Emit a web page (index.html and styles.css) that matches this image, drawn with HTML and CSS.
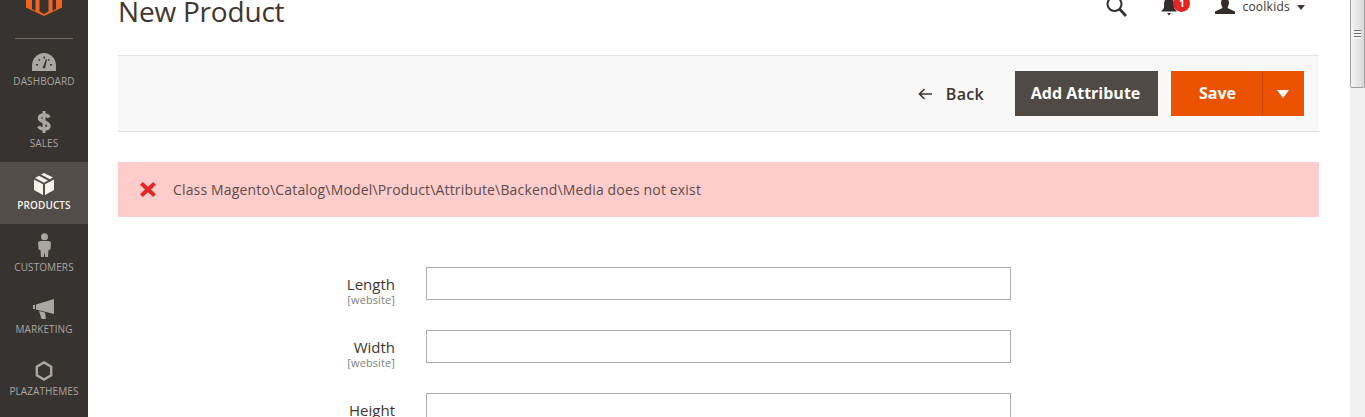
FILE: index.html
```html
<!DOCTYPE html>
<html lang="en">
<head>
    <meta charset="UTF-8">
    <title>New Product</title>
    <link rel="stylesheet" href="styles.css">
</head>
<body>
    <nav class="menu">
        <div class="logo">
            <svg width="36" height="16" viewBox="0 0 36 16"><path fill="#f26322" d="M0 0h6v9l3.500 2V0h4v11.500L18 14l4.500-2.500V0h4v11l3.500-2V0h6v7.500L18 16 0 7.500z"/></svg>
        </div>
        <a class="menu-item">
            <svg width="24" height="18" viewBox="0 0 24 18"><path fill="#aaa6a0" d="M0 18v-5C0 5.500 5.500 0 12 0s12 5.500 12 13v5z"/><path fill="#3a3632" d="M10.500 15l3.500-9 1 .5-2 9zM4 11h2v1.500H4zM7 6l1.500 1-1 1L6 7zM11.500 3.500h1.500v2h-1.500zM18 11h2v1.500h-2zM17 6l1 1-1.500 1-1-1z"/></svg>
            <span>DASHBOARD</span>
        </a>
        <a class="menu-item">
            <svg width="14" height="22" viewBox="0 0 14 22"><path fill="none" stroke="#aaa6a0" stroke-width="3.500" d="M12 6.500C11 4.500 9.500 4 7 4 4.500 4 2.500 5 2.500 7s2 3 4.500 3.800 5 1.700 5 4-2.200 3.200-5 3.200c-2.500 0-4.500-.8-5.500-2.800"/><path fill="#aaa6a0" d="M5.500 0h3v22h-3z"/></svg>
            <span>SALES</span>
        </a>
        <a class="menu-item active">
            <svg width="20" height="22" viewBox="0 0 20 22"><path fill="#f7f3e8" d="M10 0l9 4.500-3 1.800L7 1.600zM5 2.800l9 4.700-4 2.200L1 5zM0 6.500l9 4.800V22l-9-5zM20 6.500V17l-9 5V11.300z"/></svg>
            <span>PRODUCTS</span>
        </a>
        <a class="menu-item">
            <svg width="13" height="24" viewBox="0 0 13 24"><circle cx="6.500" cy="3.700" r="3.500" fill="#aaa6a0"/><path fill="#aaa6a0" d="M2.500 8h8l2.500 1 -.5 7.500-2 .5-.5 7H7.200l-.7-5-.7 5H3l-.5-7-2-.5L0 9z"/></svg>
            <span>CUSTOMERS</span>
        </a>
        <a class="menu-item">
            <svg width="22" height="20" viewBox="0 0 22 20"><path fill="#aaa6a0" d="M0 6h2v4H0zM3 5.500L21 0v15L3 10.500zM6 12l5 1.300 1 .2 1 6.500H8.500z"/></svg>
            <span>MARKETING</span>
        </a>
        <a class="menu-item">
            <svg width="18" height="20" viewBox="0 0 18 20"><path fill="none" stroke="#aaa6a0" stroke-width="2.400" d="M9 1.400l7.200 4.200v8.800L9 18.600l-7.200-4.200V5.600z"/></svg>
            <span>PLAZATHEMES</span>
        </a>
    </nav>

    <main class="content">
        <header class="page-header">
            <h1>New Product</h1>
            <div class="actions-top">
                <svg class="search-icon" width="21" height="20" viewBox="0 0 21 20"><circle cx="8.500" cy="7" r="7" fill="none" stroke="#332e2b" stroke-width="2"/><path stroke="#332e2b" stroke-width="2.600" d="M13.500 12l6.500 7"/></svg>
                <div class="bell">
                    <svg width="16" height="18" viewBox="0 0 16 18"><path fill="#332e2b" d="M8 0c3 0 5 2 5 6v4l3 3.500H0L3 10V6c0-4 2-6 5-6zM6 15h4l-2 2.500z"/></svg>
                    <span class="badge">1</span>
                </div>
                <div class="user">
                    <svg width="20" height="15" viewBox="0 0 20 15"><path fill="#332e2b" d="M10 0c2.700 0 4 1.300 4 3.500S12.800 8 12.500 9L20 12.500V15H0v-2.500L7.500 9C7.200 8 6 5.700 6 3.500S7.300 0 10 0z"/></svg>
                    <span class="user-name">coolkids</span>
                    <span class="caret"></span>
                </div>
            </div>
        </header>

        <div class="action-bar">
            <a class="back">
                <svg width="14" height="12" viewBox="0 0 14 12"><path fill="none" stroke="#41362f" stroke-width="1.700" d="M6.500 1L1.500 6l5 5M1.500 6H14"/></svg>
                <span>Back</span>
            </a>
            <button class="btn btn-dark">Add Attribute</button>
            <div class="split">
                <button class="btn btn-save">Save</button>
                <button class="btn btn-toggle"><span class="caret-white"></span></button>
            </div>
        </div>

        <div class="error-msg">
            <svg width="16" height="15" viewBox="0 0 16 15"><path fill="#e22626" d="M2.800 0L8 4.800 13.200 0 16 2.800 11 7.500l5 4.700-2.800 2.800L8 10.200 2.800 15 0 12.200l5-4.700-5-4.700z"/></svg>
            <span>Class Magento\Catalog\Model\Product\Attribute\Backend\Media does not exist</span>
        </div>

        <form class="product-form">
            <div class="field">
                <label>Length<small>[website]</small></label>
                <input type="text">
            </div>
            <div class="field">
                <label>Width<small>[website]</small></label>
                <input type="text">
            </div>
            <div class="field">
                <label>Height</label>
                <input type="text">
            </div>
        </form>
    </main>

    <div class="scrollbar">
        <div class="thumb">
            <div class="grip"></div>
        </div>
    </div>
</body>
</html>
```

FILE: styles.css
```css
/* General */
html, body {
    height: 417px;
    overflow: hidden;
}

body {
    margin: 0;
    display: flex;
    font-family: "Open Sans", "Noto Sans", sans-serif;
    color: #41362f;
    background-color: #fff;
}

/* Left menu */
.menu {
    flex: 0 0 88px;
    background-color: #373330;
    height: 417px;
    overflow: hidden;
}

.logo {
    height: 38px;
    margin: 0 15px;
    border-bottom: 1px solid #736d67;
    display: flex;
    justify-content: center;
    align-items: flex-start;
}

.menu-item {
    height: 62px;
    display: flex;
    flex-direction: column;
    align-items: center;
    justify-content: flex-end;
    box-sizing: border-box;
    padding-bottom: 12px;
    gap: 3px;
    font-size: 10px;
    letter-spacing: .1px;
    line-height: 14px;
    color: #aaa6a0;
}

.logo + .menu-item {
    height: 61px;
}

.menu-item.active {
    background-color: #524d49;
    color: #f7f3eb;
    font-weight: 600;
}

/* Page header */
.content {
    flex: 1;
    min-width: 0;
    padding: 0 30px;
}

.page-header {
    height: 55px;
    display: flex;
    justify-content: space-between;
    border-bottom: 1px solid #e3e3e3;
}

h1 {
    margin: 0;
    font-size: 28px;
    line-height: 23px;
    font-weight: 400;
    letter-spacing: -.2px;
    color: #41362f;
}

.actions-top {
    display: flex;
    align-items: flex-start;
    margin-right: 14px;
}

.search-icon {
    margin-top: -3px;
}

.bell {
    position: relative;
    margin: -2px 0 0 34px;
    height: 18px;
}

.badge {
    position: absolute;
    top: -3px;
    left: 12px;
    width: 17px;
    height: 17px;
    border-radius: 50%;
    background-color: #e22626;
    color: #fff;
    font-size: 10px;
    font-weight: 700;
    line-height: 17px;
    text-align: center;
}

.user {
    display: flex;
    align-items: flex-start;
    margin-left: 38px;
}

.user svg {
    margin-top: -1px;
}

.user-name {
    font-size: 12px;
    letter-spacing: .25px;
    line-height: 14px;
    margin-left: 7px;
    color: #41362f;
}

.caret {
    width: 0;
    height: 0;
    margin: 5px 0 0 7px;
    border-left: 4px solid transparent;
    border-right: 4px solid transparent;
    border-top: 5px solid #41362f;
}

/* Action bar */
.action-bar {
    height: 75px;
    background-color: #f8f8f8;
    border-bottom: 1px solid #e3e3e3;
    display: flex;
    align-items: center;
    justify-content: flex-end;
    padding-right: 15px;
}

.back {
    display: flex;
    align-items: center;
    gap: 14px;
    font-size: 16px;
    font-weight: 600;
    letter-spacing: .3px;
    color: #41362f;
    margin-right: 31px;
}

.btn {
    border: 0;
    height: 45px;
    margin: 0;
    padding: 0 0 1px;
    font-family: inherit;
    font-size: 16px;
    font-weight: 700;
    color: #fff;
}

.btn-dark {
    width: 143px;
    padding-right: 2px;
    background-color: #514943;
}

.split {
    display: flex;
    margin-left: 13px;
}

.btn-save {
    width: 92px;
    padding-left: 2px;
    background-color: #eb5202;
    border-right: 1px solid #c9470a;
}

.btn-toggle {
    width: 41px;
    padding-right: 2px;
    padding-bottom: 2px;
    background-color: #eb5202;
}

.caret-white {
    display: inline-block;
    border-left: 6px solid transparent;
    border-right: 6px solid transparent;
    border-top: 8px solid #fff;
    vertical-align: middle;
}

/* Error message */
.error-msg {
    height: 55px;
    margin-top: 30px;
    background-color: #fcc;
    display: flex;
    align-items: center;
    gap: 17px;
    padding-left: 22px;
    font-size: 14px;
    letter-spacing: .16px;
    color: #5c4c47;
}

/* Form */
.product-form {
    margin-top: 50px;
    display: flex;
    flex-direction: column;
    gap: 30px;
}

.field {
    height: 33px;
    display: flex;
    gap: 31px;
    align-items: flex-start;
}

.field label {
    width: 277px;
    text-align: right;
    font-size: 15px;
    font-weight: 400;
    line-height: 16px;
    padding-top: 9px;
    color: #41362f;
}

.field small {
    display: block;
    margin-top: 2px;
    font-size: 11px;
    letter-spacing: .1px;
    line-height: 12px;
    color: #808080;
}

.field input {
    width: 585px;
    height: 33px;
    box-sizing: border-box;
    border: 1px solid #adadad;
    padding: 0 10px;
    background-color: #fff;
}

/* Scrollbar */
.scrollbar {
    flex: 0 0 15px;
    margin-left: 1px;
    height: 417px;
    background-color: #f0f0f0;
    box-sizing: border-box;
}

.thumb {
    height: 88px;
    box-sizing: border-box;
    padding-top: 30px;
    background: linear-gradient(to right, #f4f4f4, #d8d8d8);
    border: 1px solid #a0a0a0;
    border-top: 0;
    border-radius: 0 0 2px 2px;
}

.grip {
    height: 9px;
    margin: 0 3px;
    background: repeating-linear-gradient(to bottom, #6e6e6e 0 1px, #f4f4f4 1px 3px);
}
```
